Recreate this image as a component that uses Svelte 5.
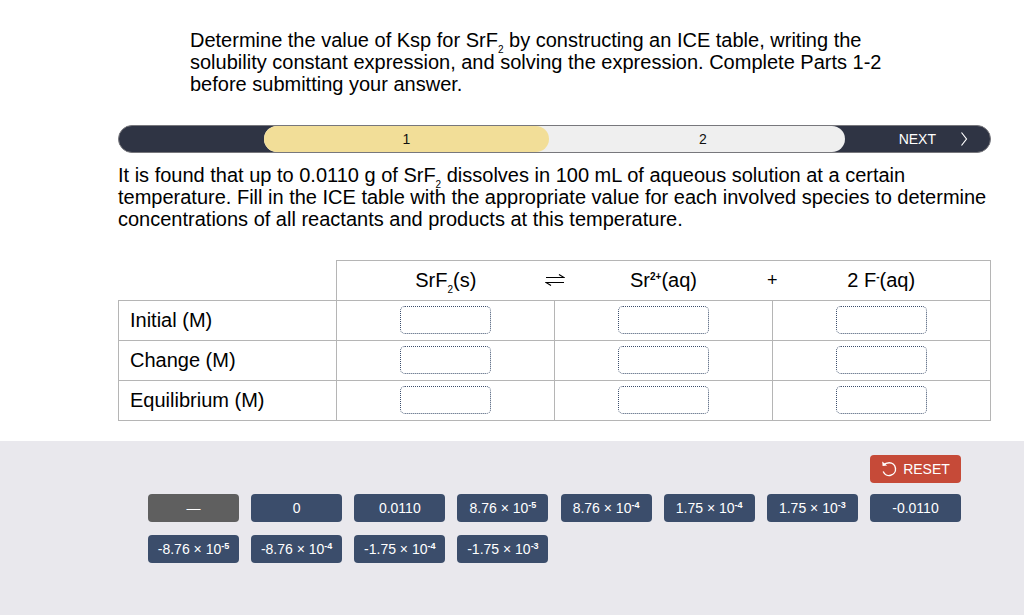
<script lang="ts">
  type Tile = { base: string; exp?: string; blank?: boolean };

  const rows = ['Initial (M)', 'Change (M)', 'Equilibrium (M)'];
  const species = ['SrF2', 'Sr2+', 'F-'];

  const tiles: Tile[] = [
    { base: '—', blank: true },
    { base: '0' },
    { base: '0.0110' },
    { base: '8.76 × 10', exp: '-5' },
    { base: '8.76 × 10', exp: '-4' },
    { base: '1.75 × 10', exp: '-4' },
    { base: '1.75 × 10', exp: '-3' },
    { base: '-0.0110' },
    { base: '-8.76 × 10', exp: '-5' },
    { base: '-8.76 × 10', exp: '-4' },
    { base: '-1.75 × 10', exp: '-4' },
    { base: '-1.75 × 10', exp: '-3' },
  ];

  const emptyGrid = (): (Tile | null)[][] => rows.map(() => species.map(() => null));

  let step = $state(1);
  let picked = $state<Tile | null>(null);
  let answers = $state(emptyGrid());

  function place(r: number, c: number) {
    answers[r][c] = picked;
    picked = null;
  }

  function reset() {
    answers = emptyGrid();
    picked = null;
  }
</script>

{#snippet value(tile: Tile)}
  <span>{tile.base}{#if tile.exp}<sup>{tile.exp}</sup>{/if}</span>
{/snippet}

<main>
  <section class="question">
    <p class="prompt">
      Determine the value of Ksp for SrF<sub>2</sub> by constructing an ICE table, writing the
      solubility constant expression, and solving the expression. Complete Parts 1-2 before
      submitting your answer.
    </p>

    <nav class="bar">
      <div class="steps">
        <button class="step first" class:active={step === 1} onclick={() => (step = 1)}>1</button>
        <button class="step second" class:active={step === 2} onclick={() => (step = 2)}>2</button>
      </div>
      <button class="next" onclick={() => (step = 2)}>
        NEXT
        <svg width="8" height="14" viewBox="0 0 8 14" aria-hidden="true">
          <path d="M1.5 0.5 6.5 7l-5 6.5" fill="none" stroke="currentColor" stroke-width="1.2" />
        </svg>
      </button>
    </nav>

    <p class="details">
      It is found that up to 0.0110 g of SrF<sub>2</sub> dissolves in 100 mL of aqueous solution at a
      certain temperature. Fill in the ICE table with the appropriate value for each involved
      species to determine concentrations of all reactants and products at this temperature.
    </p>

    <table>
      <thead>
        <tr>
          <td class="corner"></td>
          <th colspan="3">
            <div class="equation">
              <span>SrF<sub>2</sub>(s)</span>
              <span class="op">
                <svg width="20" height="12" viewBox="0 0 20 12" role="img" aria-label="in equilibrium with">
                  <path d="M1 3.5h18L14 0.5M19 8.5H1L6 11.5" fill="none" stroke="currentColor" stroke-width="1.2" />
                </svg>
              </span>
              <span>Sr<sup>2+</sup>(aq)</span>
              <span class="op">+</span>
              <span>2 F<sup>-</sup>(aq)</span>
            </div>
          </th>
        </tr>
      </thead>
      <tbody>
        {#each rows as row, r}
          <tr>
            <th scope="row">{row}</th>
            {#each species as name, c}
              <td>
                <button
                  class="slot"
                  class:filled={answers[r][c]}
                  aria-label="{row} {name}"
                  onclick={() => place(r, c)}
                >
                  {#if answers[r][c]}{@render value(answers[r][c]!)}{/if}
                </button>
              </td>
            {/each}
          </tr>
        {/each}
      </tbody>
    </table>
  </section>

  <section class="tray">
    <button class="reset" onclick={reset}>
      <svg width="16" height="16" viewBox="0 0 16 16" aria-hidden="true">
        <path d="M2.5 4C4 2.4 6 1.7 8.2 1.7a6.4 6.4 0 1 1-6 8.8" fill="none" stroke="currentColor" stroke-width="1.4" />
        <path d="M1.2 0.5 1.6 4.9 6.2 4.6z" fill="currentColor" />
      </svg>
      RESET
    </button>
    <div class="tiles">
      {#each tiles as tile}
        <button class="tile" class:blank={tile.blank} onclick={() => (picked = tile)}>
          {@render value(tile)}
        </button>
      {/each}
    </div>
  </section>
</main>

<style>
  :global(body) {
    margin: 0;
    background: #fff;
  }

  main {
    display: flex;
    flex-direction: column;
    min-height: 100vh;
    font-family: 'Liberation Sans', Arial, Helvetica, sans-serif;
    font-size: 20px;
    line-height: 22px;
    color: #000;
  }

  button {
    font-family: inherit;
    font-size: 14px;
    line-height: 20px;
    padding: 0;
    border: 0;
    cursor: pointer;
  }

  p {
    margin: 0;
  }

  sub,
  sup {
    font-size: 10px;
    line-height: 0;
  }

  sub {
    vertical-align: -6px;
  }

  sup {
    vertical-align: 7px;
    font-weight: bold;
  }

  .question {
    padding: 29px 33px 20px 118px;
  }

  .prompt {
    padding: 0 72px;
  }

  .bar {
    display: flex;
    justify-content: flex-end;
    box-sizing: border-box;
    height: 28px;
    margin: 30px 0 11px;
    border: 1px solid #77777c;
    border-radius: 14px;
    background: #2f3444;
    overflow: hidden;
  }

  .steps {
    display: flex;
    width: 66.667%;
    border-radius: 13px;
    background: #efefef;
  }

  .step {
    background: none;
    color: #111;
    border-radius: 13px;
  }

  .step.first {
    width: 49%;
  }

  .step.second {
    flex: 1;
    padding-left: 12px;
  }

  .step.active {
    background: #f2de98;
  }

  .next {
    display: flex;
    align-items: center;
    justify-content: flex-end;
    gap: 24px;
    width: 16.667%;
    padding-right: 22px;
    background: none;
    color: #fff;
  }

  table {
    width: 100%;
    margin-top: 30px;
    border-collapse: collapse;
    table-layout: fixed;
  }

  th,
  td {
    box-sizing: border-box;
    height: 40px;
    padding: 0 0 2px;
    border: 1px solid #b5b5b5;
    font-weight: normal;
    text-align: center;
  }

  .corner {
    border-top: 0;
    border-left: 0;
  }

  th[scope='row'] {
    padding-left: 11px;
    text-align: left;
  }

  /* operators sit over the borders between the species columns */
  .equation {
    display: grid;
    grid-template-columns: 1fr repeat(5, 2fr) 1fr;
    align-items: center;
  }

  .equation span:first-child {
    grid-column: 2;
  }

  .op {
    font-size: 18px;
  }

  .op svg {
    display: block;
    margin: 0 auto;
  }

  .slot {
    display: block;
    box-sizing: border-box;
    width: 91px;
    height: 28px;
    margin: 0 auto;
    border: 1px dotted #3b4d6b;
    border-radius: 5px;
    background: #fff;
  }

  .slot.filled {
    background: #3b4d6b;
    color: #fff;
  }

  .tray {
    flex: 1;
    display: flex;
    flex-direction: column;
    align-items: flex-end;
    gap: 11px;
    padding: 14px 63px 20px 148px;
    background: #e9e8ed;
  }

  .reset {
    display: flex;
    align-items: center;
    justify-content: center;
    gap: 6px;
    width: 91px;
    height: 28px;
    border-radius: 4px;
    background: #c64a38;
    color: #fff;
  }

  .tiles {
    display: grid;
    grid-template-columns: repeat(auto-fill, 91px);
    justify-content: space-between;
    row-gap: 13px;
    width: 100%;
  }

  .tile {
    height: 28px;
    border-radius: 4px;
    background: #3b4d6b;
    color: #fff;
  }

  .tile sup,
  .slot sup {
    font-size: 9px;
    vertical-align: 5px;
  }

  .tile.blank {
    background: #5f5f5f;
  }
</style>
